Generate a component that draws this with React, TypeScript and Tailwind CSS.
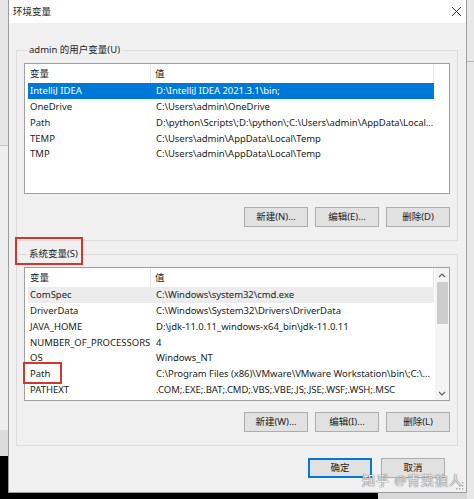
import clsx from "clsx";

const userVars = [
  { name: "IntelliJ IDEA", value: "D:\\IntelliJ IDEA 2021.3.1\\bin;", selected: true },
  { name: "OneDrive", value: "C:\\Users\\admin\\OneDrive" },
  { name: "Path", value: "D:\\python\\Scripts\\;D:\\python\\;C:\\Users\\admin\\AppData\\Local..." },
  { name: "TEMP", value: "C:\\Users\\admin\\AppData\\Local\\Temp" },
  { name: "TMP", value: "C:\\Users\\admin\\AppData\\Local\\Temp" },
];

const sysVars = [
  { name: "ComSpec", value: "C:\\Windows\\system32\\cmd.exe", hot: true },
  { name: "DriverData", value: "C:\\Windows\\System32\\Drivers\\DriverData" },
  { name: "JAVA_HOME", value: "D:\\jdk-11.0.11_windows-x64_bin\\jdk-11.0.11" },
  { name: "NUMBER_OF_PROCESSORS", value: "4" },
  { name: "OS", value: "Windows_NT" },
  { name: "Path", value: "C:\\Program Files (x86)\\VMware\\VMware Workstation\\bin\\;C:\\...", marked: true },
  { name: "PATHEXT", value: ".COM;.EXE;.BAT;.CMD;.VBS;.VBE;.JS;.JSE;.WSF;.WSH;.MSC" },
];

type Var = { name: string; value: string; selected?: boolean; hot?: boolean; marked?: boolean };

const Header = () => (
  <div className="flex h-[19px] w-[409px] bg-white leading-[14px]">
    <div className="w-[126px] pl-[5px] flex items-center border-r border-[#e5e5e5]">变量</div>
    <div className="w-[283px] pl-[4px] flex items-center border-r border-[#e5e5e5]">值</div>
  </div>
);

const Row = ({ v }: { v: Var }) => (
  <div
    className={clsx(
      "relative ml-[3px] flex h-[15.75px] w-[406px] items-center whitespace-nowrap leading-[15px]",
      v.selected && "bg-[#0078d7] text-white",
      v.hot && "bg-[#ececec]"
    )}
  >
    <span className="w-[123px] shrink-0 pl-[2px] overflow-hidden">{v.name}</span>
    <span className="pl-[5px] tracking-[-0.05px]">{v.value}</span>
    {v.marked && (
      <span className="absolute left-[-5px] top-[-4px] h-[22px] w-[39px] border-2 border-[#d6342e]" />
    )}
  </div>
);

const Chevron = ({ down }: { down?: boolean }) => (
  <svg width="8" height="5" viewBox="0 0 8 5">
    <path
      d={down ? "M1 1 L4 4 L7 1" : "M1 4 L4 1 L7 4"}
      fill="none"
      stroke="#606060"
      strokeWidth="1.2"
    />
  </svg>
);

const Btn = ({ label, focused }: { label: string; focused?: boolean }) => (
  <div
    className={clsx(
      "flex h-[20px] w-[64px] items-center justify-center bg-[#e1e1e1] leading-[14px] text-[#1a1a1a]",
      focused ? "border-2 border-[#0078d7]" : "border border-[#adadad]"
    )}
  >
    {label}
  </div>
);

const BtnRow = ({ labels }: { labels: string[] }) => (
  <div className="flex justify-end gap-[7px]">
    {labels.map((l) => (
      <Btn key={l} label={l} />
    ))}
  </div>
);

export default function App() {
  return (
    <div className="flex h-[499px] w-[474px] overflow-hidden bg-[#e4e4e4] font-['Noto_Sans','Noto_Sans_CJK_SC',sans-serif] text-[9.5px] text-[#1c1c1c]">
      {/* desktop left */}
      <div className="flex w-[8px] flex-col">
        <div className="h-[146px] bg-[#e6e6e6] border-b border-[#c8c8c8]" />
        <div className="h-[284px] bg-[#eeeeee]" />
        <div className="h-[26px] bg-[#dcdcdc]" />
        <div className="flex-1 bg-black" />
      </div>

      <div className="flex w-[459px] flex-col">
        {/* dialog */}
        <div className="relative flex h-[493px] flex-col border-x border-b border-[#9c9c9c] bg-[#f0f0f0]">
          <div className="flex h-[23px] items-center justify-between bg-white pl-[4px] pr-[4px] leading-[14px]">
            <span>环境变量</span>
            <svg width="11" height="11" viewBox="0 0 11 11">
              <path d="M1 1 L10 10 M10 1 L1 10" stroke="#333" strokeWidth="1" />
            </svg>
          </div>

          <div className="flex flex-col pl-[7px] pr-[8px] pt-[19px]">
            <fieldset className="border border-[#dcdcdc] px-[7px] pb-[13px]">
              <legend className="ml-[3px] px-[2px] leading-[16px]">admin 的用户变量(U)</legend>
              <div className="mt-[5px] flex h-[131px] flex-col border border-[#a0a0a0] bg-white">
                <Header />
                {userVars.map((v) => (
                  <Row key={v.name} v={v} />
                ))}
              </div>
              <div className="mt-[13px]">
                <BtnRow labels={["新建(N)...", "编辑(E)...", "删除(D)"]} />
              </div>
            </fieldset>

            <div className="relative mt-[5px]">
              <fieldset className="border border-[#dcdcdc] px-[7px] pb-[13px]">
                <legend className="ml-[3px] px-[2px] leading-[16px]">系统变量(S)</legend>
                <div className="mt-[5px] flex h-[134px] border border-[#a0a0a0] bg-white">
                  <div className="flex flex-1 flex-col">
                    <Header />
                    {sysVars.map((v) => (
                      <Row key={v.name} v={v} />
                    ))}
                  </div>
                  <div className="flex w-[14px] flex-col items-center bg-[#f4f4f4]">
                    <div className="flex h-[14px] items-center">
                      <Chevron />
                    </div>
                    <div className="h-[42px] w-[11px] bg-[#cdcdcd]" />
                    <div className="flex-1" />
                    <div className="flex h-[14px] items-center">
                      <Chevron down />
                    </div>
                  </div>
                </div>
                <div className="mt-[11px]">
                  <BtnRow labels={["新建(W)...", "编辑(I)...", "删除(L)"]} />
                </div>
              </fieldset>
              <span className="absolute left-[-1px] top-[-9px] h-[28px] w-[68px] border-2 border-[#d6342e]" />
            </div>

            <div className="mt-[12px] flex justify-end gap-[9px] pr-[13px]">
              <Btn label="确定" focused />
              <Btn label="取消" />
            </div>
          </div>

          {/* watermark */}
          <span className="absolute left-[353px] top-[472px] text-[13px] leading-[16px] tracking-[1px] text-white/90 [text-shadow:0_0_1px_#555,0_0_1px_#555]">
            知乎 @青菜狼人
          </span>
          <svg width="8" height="8" viewBox="0 0 8 8" className="absolute right-[2px] bottom-[2px]">
            <g fill="#b0b0b0">
              <rect x="6" y="0" width="1.5" height="1.5" />
              <rect x="3" y="3" width="1.5" height="1.5" />
              <rect x="6" y="3" width="1.5" height="1.5" />
              <rect x="0" y="6" width="1.5" height="1.5" />
              <rect x="3" y="6" width="1.5" height="1.5" />
              <rect x="6" y="6" width="1.5" height="1.5" />
            </g>
          </svg>
        </div>
        <div className="flex flex-1">
          <div className="w-[370px] bg-black" />
          <div className="flex-1 bg-[#d8d8d8]" />
        </div>
      </div>

      {/* desktop right */}
      <div className="flex w-[7px] flex-col bg-[#e8e8e8]">
        <div className="h-[62px] border-b border-[#b8b8b8]" />
      </div>
    </div>
  );
}
